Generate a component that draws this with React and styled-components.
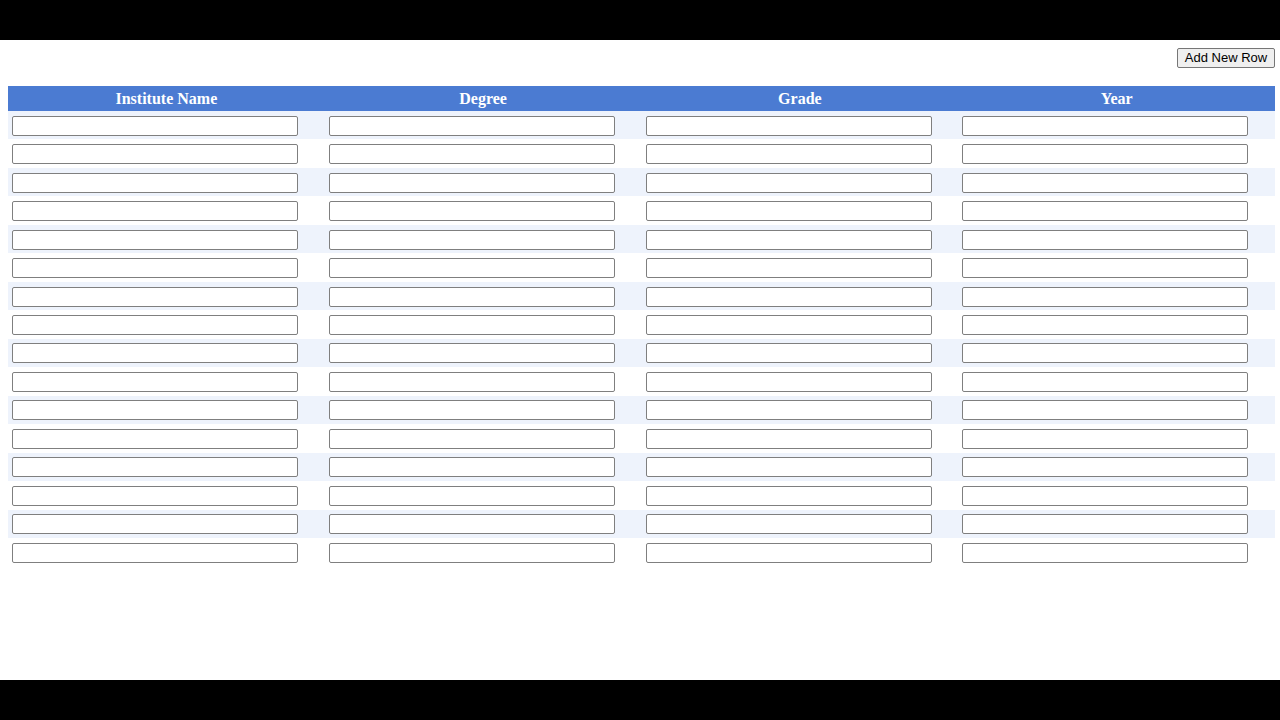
import React from "react";
import styled, { createGlobalStyle } from "styled-components";

const Global = createGlobalStyle`
  html, body { margin: 0; padding: 0; background: #000; }
  #root { width: 1280px; height: 720px; }
`;

const Frame = styled.div`
  width: 1280px;
  height: 720px;
  background: #000;
  display: flex;
  flex-direction: column;
  justify-content: center;
`;

const Page = styled.div`
  height: 640px;
  background: #fff;
  padding: 8px 5px 0 8px;
  box-sizing: border-box;
  display: flex;
  flex-direction: column;
`;

const Toolbar = styled.div`
  display: flex;
  justify-content: flex-end;
  height: 20px;
  margin-bottom: 18px;
`;

const Button = styled.button`
  font-family: "Liberation Sans", Arial, sans-serif;
  font-size: 13px;
  height: 20px;
  width: 98px;
  padding: 0;
  background: #efefef;
  color: #000;
  border: 1px solid #767676;
  border-radius: 2px;
  line-height: 18px;
`;

const Table = styled.div`
  width: 1267px;
  display: flex;
  flex-direction: column;
`;

const HeadRow = styled.div`
  display: grid;
  grid-template-columns: repeat(4, 1fr);
  height: 25px;
  background: #4b7bd2;
`;

const HeadCell = styled.div`
  font-family: "Liberation Serif", "Times New Roman", serif;
  font-weight: bold;
  font-size: 16px;
  color: #fff;
  text-align: center;
  line-height: 25px;
`;

const Row = styled.div`
  display: grid;
  grid-template-columns: repeat(4, 1fr);
  height: 28.47px;
  align-items: center;
  background: ${(p) => (p.$alt ? "#eef3fc" : "#fff")};
`;

const Cell = styled.div`
  padding: 1px 0 0 4px;
  display: flex;
  align-items: center;
`;

const Input = styled.input`
  width: 286px;
  height: 20px;
  box-sizing: border-box;
  border: 1px solid #7f7f7f;
  border-radius: 2px;
  background: #fff;
  padding: 1px 2px;
  margin: 0;
  font-family: "Liberation Sans", Arial, sans-serif;
  font-size: 13px;
`;

const cols = ["Institute Name", "Degree", "Grade", "Year"];
const rows = Array.from({ length: 16 }, (_, i) => i);

export default function App() {
  return (
    <>
      <Global />
      <Frame>
        <Page>
          <Toolbar>
            <Button>Add New Row</Button>
          </Toolbar>
          <Table>
            <HeadRow>
              {cols.map((c) => (
                <HeadCell key={c}>{c}</HeadCell>
              ))}
            </HeadRow>
            {rows.map((r) => (
              <Row key={r} $alt={r % 2 === 0}>
                {cols.map((c) => (
                  <Cell key={c}>
                    <Input type="text" />
                  </Cell>
                ))}
              </Row>
            ))}
          </Table>
        </Page>
      </Frame>
    </>
  );
}
